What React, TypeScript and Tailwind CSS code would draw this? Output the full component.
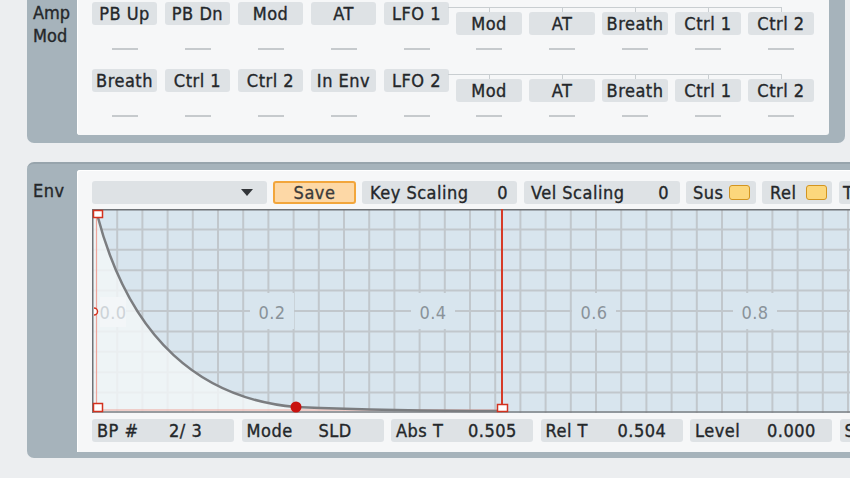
import React from "react";

const leftRow1 = ["PB Up", "PB Dn", "Mod", "AT", "LFO 1"];
const leftRow2 = ["Breath", "Ctrl 1", "Ctrl 2", "In Env", "LFO 2"];
const rightRow = ["Mod", "AT", "Breath", "Ctrl 1", "Ctrl 2"];

function ModRow({ left }: { left: string[] }) {
    return (
        <div className="flex h-[67px]">
            <div className="flex gap-[8px]">
                {left.map((label) => (
                    <div key={label} className="w-[65px] flex flex-col items-center pt-[2px]">
                        <div className="w-full h-[23px] flex items-center justify-center rounded-[3px] bg-[#dee2e5]">
                            {label}
                        </div>
                        <div className="mt-[23px] w-[26px] h-[2px] bg-[#c6cacd]" />
                    </div>
                ))}
            </div>
            {/* bracket + right group */}
            <div className="ml-[7px] flex flex-col">
                <div className="ml-[-8px] mr-[32px] mt-[7px] h-px bg-[#c9ced1]" />
                <div className="flex gap-[7px]">
                    {rightRow.map((label) => (
                        <div key={label} className="w-[66px] flex flex-col items-center">
                            <div className="w-px h-[4px] bg-[#c9ced1]" />
                            <div className="w-full h-[23px] flex items-center justify-center rounded-[3px] bg-[#dee2e5]">
                                {label}
                            </div>
                            <div className="mt-[13px] w-[26px] h-[2px] bg-[#c6cacd]" />
                        </div>
                    ))}
                </div>
            </div>
        </div>
    );
}

function Checkbox() {
    return <div className="w-[21px] h-[15px] rounded-[3px] border-[1.5px] border-[#d39520] bg-[#fcd77c]" />;
}

function EnvGraph() {
    const W = 770;
    const H = 204;
    const vx = Array.from({ length: 31 }, (_, i) => i * 25.2).filter((x) => x > 2);
    const hy = [1, 2, 3, 4, 5, 6, 7, 8, 9].map((j) => j * 20.4);
    const curve = "M5,5 C38,132 110,190 204,198 Q300,202 410,202";
    const labels = [
        { x: 180, t: "0.2" },
        { x: 341, t: "0.4" },
        { x: 502, t: "0.6" },
        { x: 663, t: "0.8" },
    ];
    const font = "'DejaVu Sans Condensed','DejaVu Sans',sans-serif";

    return (
        <svg width={W} height={H} className="block shrink-0">
            <rect x={0} y={0} width={W} height={H} fill="#d8e5ee" />
            {vx.map((x) => (
                <line key={"v" + x} x1={x} y1={0} x2={x} y2={H} stroke="#c1c7cc" strokeWidth={2} />
            ))}
            {hy.map((y) => (
                <line key={"h" + y} x1={0} y1={y} x2={W} y2={y} stroke="#c1c7cc" strokeWidth={2} />
            ))}
            {/* lighter area under the curve */}
            <path d={curve + " L410,204 L0,204 L0,0 Z"} fill="#f3f6f8" fillOpacity={0.82} />

            {labels.map((l) => (
                <g key={l.t}>
                    <rect x={l.x - 22} y={84} width={44} height={36} fill="#d8e5ee" />
                    <text
                        x={l.x}
                        y={103}
                        textAnchor="middle"
                        dominantBaseline="central"
                        fontSize={18}
                        fill="#8a939a"
                        fontFamily={font}
                        letterSpacing={0.5}
                    >
                        {l.t}
                    </text>
                </g>
            ))}
            <rect x={8} y={88} width={26} height={30} fill="#f3f6f8" />
            <text
                x={21}
                y={103}
                textAnchor="middle"
                dominantBaseline="central"
                fontSize={18}
                fill="#cdd3d7"
                fontFamily={font}
            >
                0.0
            </text>

            {/* frame */}
            <line x1={0} y1={0.75} x2={W} y2={0.75} stroke="#6f7377" strokeWidth={1.5} />
            <line x1={0.75} y1={0} x2={0.75} y2={H} stroke="#6f7377" strokeWidth={1.5} />
            <line x1={0} y1={203} x2={W} y2={203} stroke="#7a7e82" strokeWidth={1.5} />

            {/* breakpoint guides */}
            <line x1={4.5} y1={6} x2={4.5} y2={201} stroke="#eea59c" strokeWidth={1.2} />
            <line x1={4} y1={201} x2={410} y2={201} stroke="#eea59c" strokeWidth={1.2} />

            <path d={curve} fill="none" stroke="#7b7d80" strokeWidth={2.5} />

            <line x1={410} y1={0} x2={410} y2={202} stroke="#d63b28" strokeWidth={2} />

            <rect x={1.5} y={1.5} width={9} height={7} fill="#ffffff" stroke="#d3321f" strokeWidth={1.5} />
            <path d="M2,99 A3.5,3.5 0 1 1 2,106" fill="#ffffff" stroke="#d3321f" strokeWidth={1.5} />
            <rect x={1.5} y={194.5} width={9} height={8} fill="#ffffff" stroke="#d3321f" strokeWidth={1.5} />
            <rect x={405.5} y={195.5} width={10} height={7} fill="#ffffff" stroke="#d3321f" strokeWidth={1.5} />
            <circle cx={204} cy={198} r={5.5} fill="#c9120f" />
        </svg>
    );
}

export default function App() {
    return (
        <div className="w-[850px] h-[478px] overflow-hidden bg-[#eceef0] text-[18px] tracking-[0.5px] text-[#24272a] [-webkit-text-stroke:0.35px_#24272a] font-['DejaVu_Sans_Condensed','DejaVu_Sans',sans-serif] [font-stretch:condensed]">
            {/* Amp Mod panel */}
            <div className="ml-[27px] w-[818px] h-[143px] flex bg-[#a6b3bb] rounded-b-[7px]">
                <div className="w-[50px] pl-[6px] pt-[1px] leading-[23px] tracking-normal">
                    Amp
                    <br />
                    Mod
                </div>
                <div className="w-[752px] h-[135px] pl-[15px] flex flex-col bg-[#f6f7f8] rounded-b-[3px] shadow-[inset_1px_0_0_#ffffff]">
                    <ModRow left={leftRow1} />
                    <ModRow left={leftRow2} />
                </div>
            </div>

            {/* Env panel */}
            <div className="mt-[19px] ml-[27px] w-[840px] h-[296px] flex bg-[#a6b3bb] rounded-l-[7px] border-t-[2px] border-[#97a4ac] pt-[6px]">
                <div className="w-[50px] pl-[6px] pt-[9px] leading-[23px]">Env</div>
                <div className="w-[790px] h-[282px] pl-[15px] pt-[11px] flex flex-col bg-[#f6f7f8] rounded-tl-[3px] shadow-[inset_1px_1px_0_#ffffff]">
                    {/* toolbar */}
                    <div className="flex h-[23px] leading-[23px] whitespace-nowrap">
                        <div className="w-[175px] shrink-0 flex items-center justify-end pr-[14px] rounded-[3px] bg-[#dee2e5]">
                            <div className="w-0 h-0 border-l-[6px] border-r-[6px] border-t-[7px] border-l-transparent border-r-transparent border-t-[#33363a]" />
                        </div>
                        <div className="ml-[6px] w-[83px] shrink-0 flex items-center justify-center rounded-[3px] border-2 border-[#f2a63c] bg-[#fdd8a6] text-[#3a3a3a] [-webkit-text-stroke:0.3px_#3a3a3a]">
                            Save
                        </div>
                        <div className="ml-[6px] w-[155px] shrink-0 flex justify-between pl-[8px] pr-[9px] rounded-[3px] bg-[#dee2e5]">
                            <span>Key Scaling</span>
                            <span>0</span>
                        </div>
                        <div className="ml-[7px] w-[156px] shrink-0 flex justify-between pl-[7px] pr-[11px] rounded-[3px] bg-[#dee2e5]">
                            <span>Vel Scaling</span>
                            <span>0</span>
                        </div>
                        <div className="ml-[6px] w-[70px] shrink-0 flex items-center justify-between pl-[7px] pr-[6px] rounded-[3px] bg-[#dee2e5]">
                            <span>Sus</span>
                            <Checkbox />
                        </div>
                        <div className="ml-[6px] w-[70px] shrink-0 flex items-center justify-between pl-[8px] pr-[5px] rounded-[3px] bg-[#dee2e5]">
                            <span>Rel</span>
                            <Checkbox />
                        </div>
                        <div className="ml-[7px] w-[70px] shrink-0 pl-[4px] rounded-[3px] bg-[#dee2e5]">T</div>
                    </div>

                    {/* envelope */}
                    <div className="mt-[5px]">
                        <EnvGraph />
                    </div>

                    {/* breakpoint info */}
                    <div className="mt-[6px] flex gap-[7.5px] h-[23px] leading-[23px] whitespace-nowrap">
                        {[
                            ["BP #", "2/ 3"],
                            ["Mode", "SLD"],
                            ["Abs T", "0.505"],
                            ["Rel T", "0.504"],
                            ["Level", "0.000"],
                            ["S", ""],
                        ].map(([k, v]) => (
                            <div key={k} className="w-[142px] shrink-0 flex rounded-[3px] bg-[#dee2e5]">
                                <span className="w-[77px] pl-[5px] shrink-0">{k}</span>
                                <span>{v}</span>
                            </div>
                        ))}
                    </div>
                </div>
            </div>
        </div>
    );
}
